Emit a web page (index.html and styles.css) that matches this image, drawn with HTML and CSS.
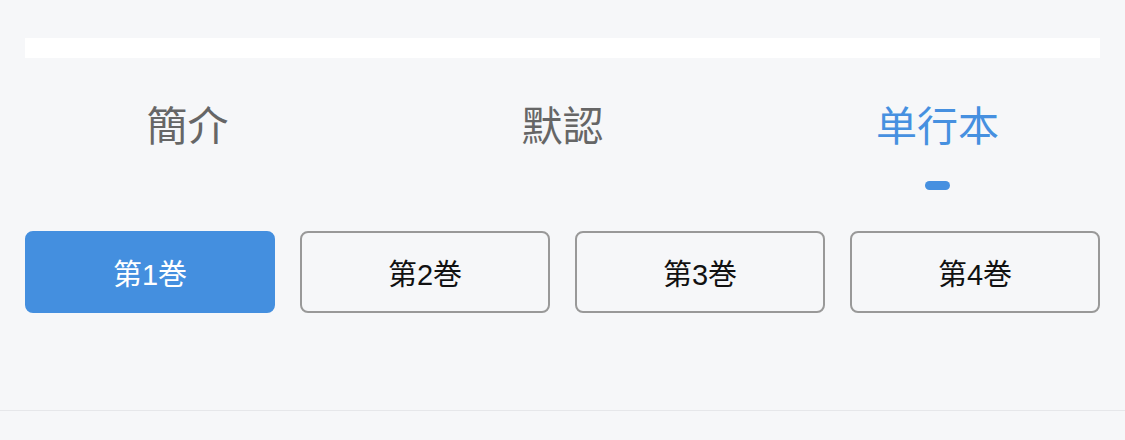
FILE: index.html
```html
<!DOCTYPE html>
<html lang="zh">
<head>
<meta charset="utf-8">
<link rel="stylesheet" href="styles.css">
</head>
<body>
<div class="page">
  <div class="strip"></div>
  <nav class="tabs">
    <div class="tab"><span class="tab-label">簡介</span></div>
    <div class="tab"><span class="tab-label">默認</span></div>
    <div class="tab active"><span class="tab-label">单行本</span><span class="indicator"></span></div>
  </nav>
  <div class="volumes">
    <div class="vol active">第1巻</div>
    <div class="vol">第2巻</div>
    <div class="vol">第3巻</div>
    <div class="vol">第4巻</div>
  </div>
</div>
</body>
</html>
```
FILE: styles.css
```css
html, body {
  margin: 0;
  padding: 0;
  background: #f6f7f9;
}
body {
  width: 1125px;
  height: 440px;
  overflow: hidden;
  font-family: "Liberation Sans", "Noto Sans CJK SC", sans-serif;
}
.page {
  padding-top: 38px;
  height: 372px;
  border-bottom: 1px solid #e6e7ea;
}
.strip {
  margin: 0 25px;
  height: 20px;
  background: #ffffff;
}
.tabs {
  display: flex;
  padding-top: 45px;
  height: 128px;
}
.tab {
  flex: 1;
  display: flex;
  flex-direction: column;
  align-items: center;
}
.tab-label {
  font-family: "Noto Sans CJK SC", sans-serif;
  font-size: 41px;
  line-height: 40px;
  color: #666666;
}
.tab.active .tab-label {
  color: #4690e0;
}
.indicator {
  margin-top: 38px;
  width: 25px;
  height: 9px;
  border-radius: 5px;
  background: #4690e0;
}
.volumes {
  display: flex;
  gap: 25px;
  margin: 0 25px;
}
.vol {
  flex: 1;
  height: 78px;
  border: 2px solid #999999;
  border-radius: 8px;
  display: flex;
  align-items: center;
  justify-content: center;
  font-size: 29px;
  color: #111111;
}
.vol.active {
  background: #448fdf;
  border-color: #448fdf;
  color: #ffffff;
}
```
